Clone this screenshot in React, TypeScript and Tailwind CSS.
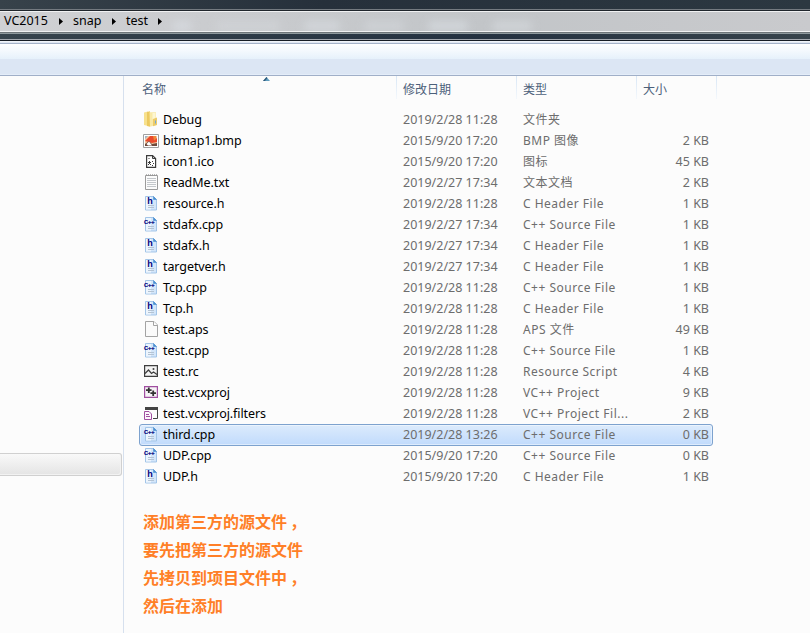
type FileItem = {
    name: string;
    icon: string;
    date: string;
    type: string;
    size: string;
    selected?: boolean;
};

const files: FileItem[] = [
    { name: "Debug", icon: "folder", date: "2019/2/28 11:28", type: "文件夹", size: "" },
    { name: "bitmap1.bmp", icon: "bmp", date: "2015/9/20 17:20", type: "BMP 图像", size: "2 KB" },
    { name: "icon1.ico", icon: "ico", date: "2015/9/20 17:20", type: "图标", size: "45 KB" },
    { name: "ReadMe.txt", icon: "txt", date: "2019/2/27 17:34", type: "文本文档", size: "2 KB" },
    { name: "resource.h", icon: "h", date: "2019/2/28 11:28", type: "C Header File", size: "1 KB" },
    { name: "stdafx.cpp", icon: "cpp", date: "2019/2/27 17:34", type: "C++ Source File", size: "1 KB" },
    { name: "stdafx.h", icon: "h", date: "2019/2/27 17:34", type: "C Header File", size: "1 KB" },
    { name: "targetver.h", icon: "h", date: "2019/2/27 17:34", type: "C Header File", size: "1 KB" },
    { name: "Tcp.cpp", icon: "cpp", date: "2019/2/28 11:28", type: "C++ Source File", size: "1 KB" },
    { name: "Tcp.h", icon: "h", date: "2019/2/28 11:28", type: "C Header File", size: "1 KB" },
    { name: "test.aps", icon: "file", date: "2019/2/28 11:28", type: "APS 文件", size: "49 KB" },
    { name: "test.cpp", icon: "cpp", date: "2019/2/28 11:28", type: "C++ Source File", size: "1 KB" },
    { name: "test.rc", icon: "rc", date: "2019/2/28 11:28", type: "Resource Script", size: "4 KB" },
    { name: "test.vcxproj", icon: "proj", date: "2019/2/28 11:28", type: "VC++ Project", size: "9 KB" },
    { name: "test.vcxproj.filters", icon: "filters", date: "2019/2/28 11:28", type: "VC++ Project Fil...", size: "2 KB" },
    { name: "third.cpp", icon: "cpp", date: "2019/2/28 13:26", type: "C++ Source File", size: "0 KB", selected: true },
    { name: "UDP.cpp", icon: "cpp", date: "2015/9/20 17:20", type: "C++ Source File", size: "0 KB" },
    { name: "UDP.h", icon: "h", date: "2015/9/20 17:20", type: "C Header File", size: "1 KB" },
];

const notes = [
    { text: "添加第三方的源文件", comma: true },
    { text: "要先把第三方的源文件", comma: false },
    { text: "先拷贝到项目文件中", comma: true },
    { text: "然后在添加", comma: false },
];

// blue page with a folded corner, shared by .h and .cpp
function CodePage() {
    return (
        <>
            <path d="M2.5 1.5h8l3 3v10.500h-11z" fill="#d3e6fa" stroke="#a3c5e8" />
            <path d="M3 2h5v12.500H3z" fill="#edf5fd" />
            <path d="M10.500 1.500v3h3z" fill="#4a8fd0" stroke="#4a8fd0" strokeWidth="0.600" />
            <path d="M5 10.500h6M5 12.500h6" stroke="#b4c3d3" />
        </>
    );
}

function FileIcon({ kind }: { kind: string }) {
    return (
        <svg width="16" height="16" viewBox="0 0 16 16" fill="none" className="mb-0.5 shrink-0">
            {kind === "folder" && (
                <>
                    <path d="M1 1.500L5 .500v14.500l-4-1z" fill="#f7e08c" />
                    <path d="M4 1L7 .300v15.400L4 15z" fill="#ecc95f" />
                    <path d="M6.500 1.200H13V14l-6 1.700z" fill="#f9e9a6" />
                    <path d="M9.500 2H12.500v6H9.500z" fill="#fdf6d2" />
                    <path d="M14 6.500V14l-4 1.200V8z" fill="#eccb69" />
                    <path d="M12.500 9.500v3" stroke="#6fa8dc" />
                </>
            )}
            {kind === "bmp" && (
                <>
                    <path d="M.500 2.500h15v13H.500z" fill="#fff" stroke="#a0a0a0" />
                    <path d="M2 4h12v10H2z" fill="#f6c9a0" />
                    <path d="M2 9L7 4h5l2 3v3l-5 1z" fill="#ea4a2c" />
                    <path d="M10 4h3v3l-2 1.500z" fill="#ef8a3c" />
                    <path d="M2 12l4-3 3 3 5-1v3H2z" fill="#6e4a3c" />
                    <path d="M3.500 12l2.500-2.500L9 13.500H5z" fill="#fff" />
                    <path d="M2 4h3L2 7z" fill="#9db3c8" />
                </>
            )}
            {kind === "ico" && (
                <>
                    <path d="M3.600 2.600h6l3 3v8.800h-9z" fill="#fff" stroke="#3c3c3c" strokeWidth="1.200" />
                    <path d="M9.500 2.500v3h3" stroke="#3c3c3c" />
                    <path d="M6 8h1v1H6zM5 9h3v1H5zM5 11h1v1H5zM7 11h1v1H7zM6 10h1v1H6zM9 8h1v1H9zM10 10h1v1h-1zM9 12h1v1H9zM5.500 5h1v1h-1z" fill="#3c3c3c" />
                </>
            )}
            {kind === "txt" && (
                <>
                    <path d="M2.500 1.500h12v14h-12z" fill="#fbfbfb" stroke="#9b9b9b" />
                    <path d="M4 4.500h9M4 6.500h9M4 8.500h9M4 10.500h9M4 12.500h9" stroke="#c3c7cb" />
                    <path d="M3 .900h11" stroke="#8c8c8c" strokeDasharray="1 1" />
                </>
            )}
            {kind === "file" && (
                <>
                    <path d="M2.500 .500h8.500l3.500 3.500v11.500h-12z" fill="#fafafa" stroke="#a3a3a3" />
                    <path d="M10.500 .500v4h4" fill="#fff" stroke="#a3a3a3" />
                </>
            )}
            {kind === "h" && (
                <>
                    <CodePage />
                    <text x="4.300" y="9" fontSize="9" fontWeight="700" fill="#00007d" fontFamily="Liberation Sans, sans-serif">h</text>
                </>
            )}
            {kind === "cpp" && (
                <>
                    <CodePage />
                    <text x="1" y="8" fontSize="6" fontWeight="700" fill="#00007d" stroke="#00007d" strokeWidth="0.200" textLength="10.500" lengthAdjust="spacingAndGlyphs" fontFamily="Liberation Sans, sans-serif">C++</text>
                </>
            )}
            {kind === "rc" && (
                <>
                    <path d="M1.600 2.600h12.800v10.800H1.600z" fill="#f4f4f4" stroke="#3f3f3f" strokeWidth="1.200" />
                    <path d="M2 10.500L5.500 7l3 3.500 2-1.500 3.500 2.500" stroke="#3f3f3f" strokeWidth="1.200" />
                    <circle cx="10.500" cy="6" r="1" fill="#3f3f3f" />
                </>
            )}
            {kind === "proj" && (
                <>
                    <path d="M1.600 2.600h12.800v10.800H1.600z" fill="#f7f3f7" stroke="#a04fa0" strokeWidth="1.200" />
                    <path d="M3 6.200h5.600M5.800 3.400V9M7.400 9.200H13M10.200 6.400V12" stroke="#333" strokeWidth="1.800" />
                </>
            )}
            {kind === "filters" && (
                <>
                    <path d="M2.500 5V3.500h12v10H10" fill="none" stroke="#444" />
                    <path d="M2 2h13v3H2z" fill="#444" />
                    <path d="M1.500 6.500H6L8.500 9v5.500h-7z" fill="#fbf4fb" stroke="#a04fa0" />
                    <path d="M3 9.500h3M3 11.500h4" stroke="#a04fa0" />
                </>
            )}
        </svg>
    );
}

function Crumb({ label, className }: { label: string; className: string }) {
    return (
        <div className={"flex items-center " + className}>
            <span className="flex-1 whitespace-nowrap">{label}</span>
            <svg width="4" height="7" viewBox="0 0 4 7">
                <path d="M0 0l4 3.500L0 7z" fill="#000" />
            </svg>
        </div>
    );
}

function AddressBar() {
    return (
        <header>
            <div className="h-[9px] bg-linear-to-r from-[#37424a] via-[#26303b] via-40% to-[#2c3841]" />
            <div className="h-px bg-[#747a80]" />
            <div className="h-px bg-[#20262c]" />
            <div className="relative flex h-[21px] items-center overflow-hidden border-y border-[#f0f1f2] bg-linear-to-r from-[#d0d1d4] via-[#c2c5c8] via-60% to-[#c9cacd] text-[12.5px] text-black">
                {/* glow of the wallpaper behind the glass */}
                <div className="absolute inset-x-0 top-2.5 flex h-2 gap-6 pl-[172px] opacity-70 blur-[4px] *:rounded-full">
                    <span className="w-5 bg-[#dce0e6]" />
                    <span className="w-16 bg-[#d4d7db]" />
                    <span className="w-9 bg-[#dadee3]" />
                    <span className="w-10 bg-[#d4d8dc]" />
                    <span className="w-10 bg-[#dce1e6]" />
                    <span className="w-10 bg-[#d9dde1]" />
                </div>
                <Crumb label="VC2015" className="relative w-[59px] pl-1 [&_svg]:-mr-1" />
                <Crumb label="snap" className="relative ml-3.5 w-[39px] [&_svg]:-mr-1" />
                <Crumb label="test" className="relative ml-3.5 w-8 [&_svg]:-mr-1" />
            </div>
            <div className="h-px bg-[#6e7579]" />
            <div className="h-px bg-[#8f9a9e]" />
            <div className="h-[5px] bg-linear-to-r from-[#36434c] via-[#243140] via-60% to-[#37434b]" />
            <div className="h-px bg-[#a3a7ae]" />
            <div className="h-px bg-[#171d24]" />
            <div className="h-px bg-[#f0f4f9]" />
            <div className="h-px bg-[#dfe6f1]" />
            <div className="h-px bg-[#a5b3c9]" />
            <div className="h-[15px] bg-linear-to-b from-white to-[#e6f1fb]" />
            <div className="h-[15px] bg-[#dce6f4]" />
            <div className="h-px bg-[#e4edf9]" />
            <div className="h-px bg-[#a0afc8]" />
        </header>
    );
}

function ColumnHeader() {
    const sep = "w-px shrink-0 bg-linear-to-b from-[#d8e6f5] to-[#f4f8fc]";
    return (
        <div className="relative flex h-[23px] text-[12px] text-[#4c607a] *:pt-[5px]">
            <span className="w-[272px] pl-[18px]">名称</span>
            <i className={sep} />
            <span className="w-[119px] pl-1.5">修改日期</span>
            <i className={sep} />
            <span className="w-[119px] pl-1.5">类型</span>
            <i className={sep} />
            <span className="w-[79px] pl-1.5">大小</span>
            <i className={sep} />
            <svg width="7" height="4" viewBox="0 0 7 4" className="absolute top-px left-[139px] pt-0!">
                <path d="M0 4l3.500-4L7 4z" fill="#5f9dbf" />
                <path d="M0 4l3.500-4 .800 1L2 4z" fill="#2e5878" />
            </svg>
        </div>
    );
}

function FileRow({ file }: { file: FileItem }) {
    const base = "-mb-px ml-[15px] flex h-[22px] w-[574px] items-center rounded-[3px] border pl-[3px] text-[12.5px] leading-5 text-[#6d6d6d] whitespace-nowrap";
    const look = file.selected
        ? "border-[#7da2ce] bg-linear-to-b from-[#dcebfc] to-[#c1dbfc] shadow-[inset_0_0_0_1px_rgba(255,255,255,0.45)]"
        : "border-transparent";
    return (
        <li className={base + " " + look}>
            <FileIcon kind={file.icon} />
            <span className="w-60 pl-1 tracking-[-0.08px] text-black">{file.name}</span>
            <span className="w-30 pl-1">{file.date}</span>
            <span className="w-[118px] pl-1 text-[12px] tracking-[0.5px]">{file.type}</span>
            <span className="flex-1 pr-[3px] text-right">{file.size}</span>
        </li>
    );
}

export default function App() {
    return (
        <div className="flex h-[633px] w-[810px] flex-col overflow-hidden bg-[#fcfcfc] font-['Noto_Sans','Noto_Sans_CJK_SC',sans-serif]">
            <AddressBar />
            <div className="flex flex-1">
                <aside className="w-[124px] border-r border-[#d6e0ee] pt-[377px]">
                    <div className="h-[23px] w-[122px] rounded-r-[3px] border border-l-0 border-[#d0d0d0] bg-linear-to-b from-[#f9f9f9] to-[#e4e4e4] shadow-[inset_-1px_-1px_0_#f2f2f2]" />
                </aside>
                <main className="flex-1">
                    <ColumnHeader />
                    <ul className="mt-2.5">
                        {files.map((file) => (
                            <FileRow key={file.name} file={file} />
                        ))}
                    </ul>
                    <div className="mt-[21px] ml-[19px] text-[16px] leading-7 font-bold text-[#ff7f27]">
                        {notes.map((line) => (
                            <p key={line.text}>
                                {line.text}
                                {line.comma && <span className="pl-[3px]">，</span>}
                            </p>
                        ))}
                    </div>
                </main>
            </div>
        </div>
    );
}
